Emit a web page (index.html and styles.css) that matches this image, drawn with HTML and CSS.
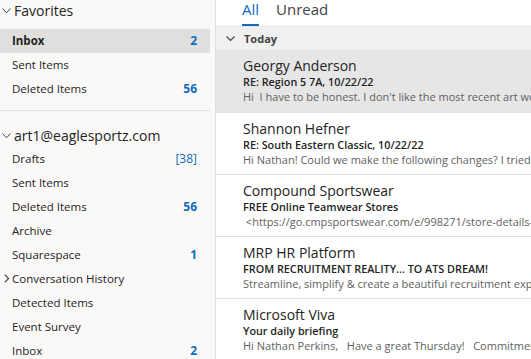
FILE: index.html
```html
<!DOCTYPE html>
<html>
<head>
<meta charset="utf-8">
<link rel="stylesheet" href="styles.css">
</head>
<body>
<div class="app">
  <nav class="sidebar">
    <div class="group-head fav-head">
      <svg class="chev" width="9" height="6" viewBox="0 0 9 6"><path d="M0.5 0.5 L4.5 4.8 L8.5 0.5" fill="none" stroke="#424242" stroke-width="1"/></svg>
      <span>Favorites</span>
    </div>
    <div class="folder selected"><span class="fname">Inbox</span><span class="count">2</span></div>
    <div class="folder"><span class="fname">Sent Items</span></div>
    <div class="folder"><span class="fname">Deleted Items</span><span class="count">56</span></div>
    <div class="sep"></div>
    <div class="group-head acct-head">
      <svg class="chev" width="9" height="6" viewBox="0 0 9 6"><path d="M0.5 0.5 L4.5 4.8 L8.5 0.5" fill="none" stroke="#424242" stroke-width="1"/></svg>
      <span>art1@eaglesportz.com</span>
    </div>
    <div class="folder"><span class="fname">Drafts</span><span class="count light">[38]</span></div>
    <div class="folder"><span class="fname">Sent Items</span></div>
    <div class="folder"><span class="fname">Deleted Items</span><span class="count">56</span></div>
    <div class="folder"><span class="fname">Archive</span></div>
    <div class="folder"><span class="fname">Squarespace</span><span class="count">1</span></div>
    <div class="folder has-sub">
      <svg class="chev-r" width="6" height="9" viewBox="0 0 6 9"><path d="M0.8 0.6 L4.6 4.5 L0.8 8.4" fill="none" stroke="#424242" stroke-width="1.2"/></svg>
      <span class="fname">Conversation History</span>
    </div>
    <div class="folder"><span class="fname">Detected Items</span></div>
    <div class="folder"><span class="fname">Event Survey</span></div>
    <div class="folder"><span class="fname">Inbox</span><span class="count">2</span></div>
  </nav>
  <main class="list">
    <div class="tabs">
      <div class="tab active">All</div>
      <div class="tab">Unread</div>
    </div>
    <div class="section">
      <svg class="chev-s" width="9" height="6" viewBox="0 0 9 6"><path d="M0.5 0.5 L4.5 4.5 L8.5 0.5" fill="none" stroke="#424242" stroke-width="1.1"/></svg>
      <span>Today</span>
    </div>
    <div class="msg selected">
      <div class="from">Georgy Anderson</div>
      <div class="subj">RE: Region 5 7A, 10/22/22</div>
      <div class="prev">Hi&nbsp; I have to be honest. I don't like the most recent art work that was sent over</div>
    </div>
    <div class="msg">
      <div class="from">Shannon Hefner</div>
      <div class="subj">RE: South Eastern Classic, 10/22/22</div>
      <div class="prev">Hi Nathan! Could we make the following changes? I tried to explain</div>
    </div>
    <div class="msg">
      <div class="from">Compound Sportswear</div>
      <div class="subj">FREE Online Teamwear Stores</div>
      <div class="prev">&nbsp;&lt;https://go.cmpsportswear.com/e/998271/store-details-page</div>
    </div>
    <div class="msg">
      <div class="from">MRP HR Platform</div>
      <div class="subj">FROM RECRUITMENT REALITY... TO ATS DREAM!</div>
      <div class="prev">Streamline, simplify &amp; create a beautiful recruitment experience</div>
    </div>
    <div class="msg">
      <div class="from">Microsoft Viva</div>
      <div class="subj">Your daily briefing</div>
      <div class="prev">Hi Nathan Perkins,&nbsp;&nbsp; Have a great Thursday!&nbsp;&nbsp; Commitments</div>
    </div>
  </main>
</div>
</body>
</html>
```
FILE: styles.css
```css
* { box-sizing: border-box; }
html, body { margin: 0; padding: 0; }
body {
  font-family: "Open Sans", "Noto Sans", "Liberation Sans", sans-serif;
  color: #242424;
  background: #ffffff;
}
.app {
  display: flex;
  width: 531px;
  height: 359px;
  overflow: hidden;
}
.sidebar {
  width: 216px;
  flex: none;
  background: #faf9f8;
  padding-right: 5px;
  border-right: 1px solid #e1dfdd;
  display: flex;
  flex-direction: column;
}
.sidebar > * { flex: none; }
.group-head {
  display: flex;
  align-items: center;
  font-size: 14px;
  line-height: 22px;
  color: #242424;
}
.fav-head { height: 29px; padding-bottom: 7px; }
.acct-head { height: 36px; padding-top: 13px; }
.chev { margin: 0 3px 0 2px; flex: none; }
.folder {
  height: 24px;
  display: flex;
  align-items: center;
  padding: 0 13px 1px 12px;
  font-size: 11.5px;
  color: #242424;
  position: relative;
}
.folder.selected { background: #e1dfdd; font-weight: 700; }
.fname { flex: 1; white-space: nowrap; }
.count { color: #0f6cbd; font-weight: 700; font-size: 12px; }
.count.light { font-weight: 400; }
.chev-r { position: absolute; left: 4px; top: 7px; }
.sep { height: 1px; background: #e1dfdd; margin: 9px 0 0 0; }
.list {
  flex: 1;
  min-width: 0;
  display: flex;
  flex-direction: column;
}
.list > * { flex: none; }
.tabs {
  height: 27px;
  display: flex;
  padding-left: 26px;
  gap: 17px;
  border-bottom: 1px solid #e6e6e6;
}
.tab {
  font-size: 15px;
  line-height: 19px;
  color: #424242;
  height: 26px;
}
.tab.active {
  color: #0f6cbd;
  border-bottom: 2px solid #0f6cbd;
}
.section {
  height: 23px;
  display: flex;
  align-items: center;
  background: #f0f0f0;
  font-size: 11px;
  font-weight: 700;
  color: #424242;
  padding-left: 10px;
}
.chev-s { margin-right: 9px; }
.msg {
  height: 62px;
  border-bottom: 1px solid #e0e0e0;
  padding: 6px 0 0 27px;
  white-space: nowrap;
  overflow: hidden;
}
.msg.selected { background: #e6e6e6; height: 63px; }
.from { font-size: 14px; line-height: 19px; color: #242424; }
.subj { font-size: 10.8px; line-height: 14px; font-weight: 600; color: #242424; }
.prev { font-size: 11px; line-height: 15px; color: #616161; }
```
